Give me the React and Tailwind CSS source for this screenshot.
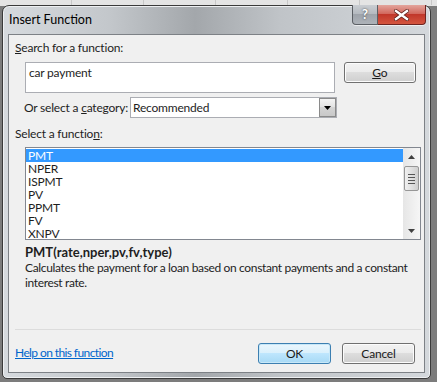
import React from 'react'

const FONT = { fontFamily: 'Lato, "Liberation Sans", sans-serif' }

const FUNCS = ['PMT', 'NPER', 'ISPMT', 'PV', 'PPMT', 'FV', 'XNPV']

function Btn({ children, primary, className = '' }) {
  return (
    <div
      className={
        'w-[73px] h-[21px] rounded-[3px] border flex items-center justify-center text-[12px] text-[#1a1a1a] ' +
        (primary
          ? 'border-[#3c7fb1] bg-[linear-gradient(#eaf6fd,#d9f0fc_50%,#bee6fd_50%,#a7d9f5)] shadow-[inset_0_0_0_1px_#c8e8f8] '
          : 'border-[#707070] bg-[linear-gradient(#f2f2f2,#ebebeb_50%,#dddddd_50%,#cfcfcf)] shadow-[inset_0_0_0_1px_#fcfcfc] ') +
        className
      }
    >
      {children}
    </div>
  )
}

function ScrollBar() {
  return (
    <div className="w-[17px] h-full bg-[linear-gradient(90deg,#e6e6e6,#f6f6f6)] flex flex-col items-center">
      <div className="h-[17px] w-full flex items-center justify-center">
        <svg width="7" height="4" viewBox="0 0 7 4"><path d="M0 4 L3.5 0 L7 4 Z" fill="#404040" /></svg>
      </div>
      <div className="w-[15px] h-[25px] mt-[1px] rounded-[2px] border border-[#979797] bg-[linear-gradient(90deg,#f0f0f0,#e0e0e0_50%,#cfcfcf)] flex flex-col items-center justify-center gap-[2px]">
        <div className="w-[7px] h-[1px] bg-[#555]" />
        <div className="w-[7px] h-[1px] bg-[#555]" />
        <div className="w-[7px] h-[1px] bg-[#555]" />
        <div className="w-[7px] h-[1px] bg-[#555]" />
      </div>
      <div className="flex-1" />
      <div className="h-[17px] w-full flex items-center justify-center">
        <svg width="7" height="4" viewBox="0 0 7 4"><path d="M0 0 L3.5 4 L7 0 Z" fill="#404040" /></svg>
      </div>
    </div>
  )
}

export default function App() {
  return (
    <div className="w-[437px] h-[382px] overflow-hidden bg-[linear-gradient(#e4e4e4_0px,#e4e4e4_6px,#7c7c7c_6px)] relative" style={FONT}>
      {/* excel grid behind the dialog */}
      <div className="h-[5px] flex">
        {[0, 1, 2, 3, 4, 5].map(i => (
          <div key={i} className="w-[72px] h-full border-r border-[#c8c8c8]" />
        ))}
      </div>

      <div className="ml-[2px] w-[429px] h-[374px] rounded-t-[7px] rounded-b-[5px] border border-[#3a3a3a] bg-[linear-gradient(90deg,#d6dade,#c3c7cb_25%,#a3a7ab_45%,#c0c4c8_65%,#d4d8dc)] shadow-[inset_0_0_0_1px_#eef0f2] flex flex-col px-[5px] pb-[5px]">
        {/* title bar */}
        <div className="h-[28px] flex items-start">
          <div className="text-[12.5px] text-black leading-[28px] pl-[1px]">Insert Function</div>
          <div className="flex-1" />
          <div className="flex -mt-[1px] mr-[-1px] shadow-[0_1px_0_#ffffff99] rounded-b-[4px]">
            <div className="w-[26px] h-[20px] rounded-bl-[4px] border border-[#5b5f64] border-t-0 bg-[linear-gradient(#c9cdd2,#b3b8be_50%,#9ea3aa_50%,#aeb3b9)] flex items-center justify-center text-white text-[13px] font-bold [text-shadow:0_0_2px_#333]">
              ?
            </div>
            <div className="w-[48px] h-[20px] rounded-br-[4px] border border-[#6e2420] border-t-0 border-l-0 bg-[linear-gradient(#e3a59d,#d2695e_45%,#c1372a_50%,#d4553f)] flex items-center justify-center">
              <svg width="15" height="12" viewBox="0 0 15 12">
                <path d="M2 2 L13 10 M13 2 L2 10" stroke="#5a1e19" strokeWidth="4" strokeLinecap="square" />
                <path d="M2 2 L13 10 M13 2 L2 10" stroke="#ffffff" strokeWidth="2.4" strokeLinecap="square" />
              </svg>
            </div>
          </div>
        </div>

        {/* client area */}
        <div className="flex-1 border border-[#7d8186] bg-[#f0f0f0] flex flex-col pl-[6px] pr-[8px] pt-[5px] text-[12px] tracking-[-0.2px] text-[#1e1e1e]">
          <div className="h-[15px] leading-[15px]"><span className="underline">S</span>earch for a function:</div>

          <div className="mt-[7px] flex items-start">
            <div className="ml-[10px] w-[312px] h-[31px] border border-[#abadb3] bg-white px-[3px] pt-[2px] leading-[15px]">car payment</div>
            <Btn className="ml-[9px]"><span className="underline">G</span>o</Btn>
          </div>

          <div className="mt-[4px] flex items-center h-[21px]">
            <div className="ml-[9px] w-[106px] whitespace-nowrap">Or select a <span className="underline">c</span>ategory:</div>
            <div className="w-[207px] h-[21px] border border-[#abadb3] bg-white flex items-center pl-[2px]">
              <span className="flex-1">Recommended</span>
              <div className="w-[17px] h-[19px] border border-[#8a8a8a] bg-[linear-gradient(#f4f4f4,#e2e2e2_50%,#d4d4d4_50%,#c8c8c8)] flex items-center justify-center">
                <svg width="7" height="4" viewBox="0 0 7 4"><path d="M0 0 L3.5 4 L7 0 Z" fill="#000" /></svg>
              </div>
            </div>
          </div>

          <div className="mt-[8px] h-[15px] leading-[15px]">Select a functio<span className="underline">n</span>:</div>

          <div className="mt-[6px] ml-[10px] w-[396px] h-[93px] border border-[#828790] bg-white flex">
            <div className="flex-1 pt-[1px]">
              {FUNCS.map((f, i) => (
                <div
                  key={f}
                  className={'h-[13px] leading-[13px] pl-[2px] ' + (i === 0 ? 'bg-[#3399ff] text-white' : '')}
                >
                  {f}
                </div>
              ))}
            </div>
            <ScrollBar />
          </div>

          <div className="mt-[5px] ml-[10px] h-[15px] leading-[15px] font-bold text-[13px] tracking-normal">PMT(rate,nper,pv,fv,type)</div>
          <div className="ml-[10px] leading-[15px] w-[392px] tracking-[-0.35px]">
            Calculates the payment for a loan based on constant payments and a constant interest rate.
          </div>

          <div className="mt-auto h-[1px] w-[406px] bg-[#dcdcdc]" />

          <div className="mt-[13px] mb-[8px] flex items-center">
            <span className="text-[#0066cc] underline -mt-[2px] tracking-[-0.6px]">Help on this function</span>
            <div className="flex-1" />
            <Btn primary>OK</Btn>
            <Btn className="ml-[11px] mr-[1px]">Cancel</Btn>
          </div>
        </div>
      </div>
    </div>
  )
}
